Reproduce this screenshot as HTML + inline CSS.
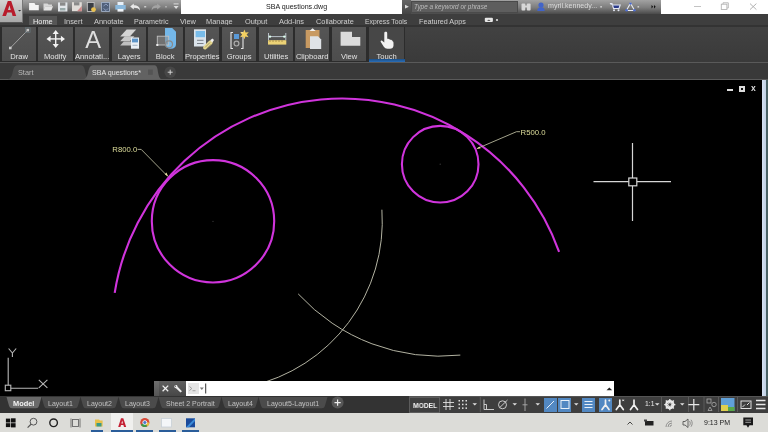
<!DOCTYPE html>
<html><head><meta charset="utf-8">
<style>
*{margin:0;padding:0;box-sizing:border-box}
html,body{width:768px;height:432px;overflow:hidden;background:#000;font-family:"Liberation Sans",sans-serif}
.a{position:absolute}
svg{will-change:transform}
.t{position:absolute;white-space:nowrap;line-height:1;will-change:transform}
#qat{left:0;top:0;width:768px;height:14.3px;background:linear-gradient(#a2a2a2,#7c7c7c 55%,#4a4a4a)}
#tabs{left:0;top:14.3px;width:768px;height:11px;background:#3e3e3e}
#rib{left:0;top:25px;width:768px;height:37px;background:linear-gradient(#424242,#3a3a3a)}
#ribd{left:0;top:25px;width:405px;height:37px;background:#2c2c2c}
.btn{position:absolute;top:27px;width:34.3px;height:34.4px;background:linear-gradient(#555,#4d4d4d)}
.bl{position:absolute;left:0;width:100%;top:26px;text-align:center;font-size:7.6px;color:#e2e2e2;white-space:nowrap;line-height:1;will-change:transform}
.rt{font-size:7.4px;color:#cfcfcf;top:16.5px}
#ftabs{left:0;top:62px;width:768px;height:18px;background:#393939;border-top:1.5px solid #5a5a5a}
</style></head><body>

<!-- canvas drawing -->
<svg class="a" style="left:0;top:0" width="768" height="432" viewBox="0 0 768 432">
  <g fill="none" stroke="#d034dc" stroke-width="2.1">
    <path d="M114.7 292.9 A230.2 230.2 0 0 1 559.1 251.9"/>
    <circle cx="213" cy="221.3" r="61.2"/>
    <circle cx="440.2" cy="164.2" r="38.3"/>
  </g>
  <g fill="none" stroke="#bcbcaa" stroke-width="0.95">
    <path d="M381.9 209.7 A169 169 0 0 1 250 386.2"/>
    <path d="M298.2 293.9 A192.2 192.2 0 0 0 460.3 355.1"/>
  </g>
  <g fill="none" stroke="#c0c0a4" stroke-width="0.85">
    <path d="M137.6 149.4 L141.2 149.4 L167.7 176.3"/>
    <path d="M520 131.7 L516.5 131.7 L477 148.6"/>
  </g>
  <g fill="#e8e0a0">
    <path d="M168.2 176.6 L164.8 174.2 L166.4 172.6 Z"/>
    <path d="M476.6 148.8 L479.6 146.4 L480.5 148.4 Z"/>
  </g>
  <text x="112.3" y="152.3" font-family="Liberation Sans" font-size="7.75" fill="#dcdc9a">R800.0</text>
  <text x="520.6" y="135.2" font-family="Liberation Sans" font-size="7.75" fill="#dcdc9a">R500.0</text>
  <circle cx="213" cy="221.3" r="0.6" fill="#444"/>
  <circle cx="440.2" cy="164.2" r="0.6" fill="#444"/>
  <!-- crosshair -->
  <g stroke="#d6d6d6" stroke-width="1.2" fill="none">
    <path d="M632.5 143 V178 M632.5 186 V221 M593.5 181.7 H628.8 M636.8 181.7 H671"/>
    <rect x="628.8" y="178" width="8" height="7.8"/>
  </g>
  <!-- UCS -->
  <g stroke="#b8b8b8" stroke-width="1.1" fill="none">
    <path d="M8.2 357.8 V385.2 M10.8 388.2 H38.2"/>
    <rect x="5.3" y="385.2" width="5.5" height="5.5"/>
    <path d="M38.8 379.8 L47.4 387.8 M47.4 379.8 L38.8 387.8"/>
    <path d="M8.6 348.5 L12.4 353 L16.2 348.5 M12.4 353 V357"/>
  </g>
</svg>

<!-- right blue strip -->
<div class="a" style="left:762px;top:80px;width:4.4px;height:316px;background:linear-gradient(90deg,#d6e2f4,#c0d0e4)"></div>
<div class="a" style="left:766.4px;top:80px;width:1.6px;height:316px;background:#4a6266"></div>

<!-- viewport controls -->
<div class="a" style="left:726.6px;top:88.8px;width:6.4px;height:1.8px;background:#ddd"></div>
<div class="a" style="left:739px;top:85.5px;width:6px;height:6px;background:#ddd"></div>
<div class="a" style="left:741px;top:88px;width:2px;height:2px;background:#111"></div>
<div class="t" style="left:750.5px;top:83.5px;font-size:8.5px;color:#ddd;font-weight:bold">x</div>

<!-- QAT -->
<div id="qat" class="a"></div>
<div class="a" style="left:180.6px;top:0;width:221.7px;height:13.6px;background:#fff"></div>
<div class="t" style="left:265.6px;top:3.6px;font-size:7.1px;color:#1a1a1a">SBA questions.dwg</div>
<div class="a" style="left:402.3px;top:0;width:8.7px;height:13.5px;background:linear-gradient(#666,#444)"></div>
<div class="t" style="left:404.8px;top:4px;font-size:5px;color:#ddd">&#9654;</div>
<div class="a" style="left:411px;top:0.8px;width:107.2px;height:12px;background:#5e5e5e;border:1px solid #4a4a4a"></div>
<div class="t" style="left:414px;top:3.6px;font-size:6.4px;color:#bdbdbd;font-style:italic">Type a keyword or phrase</div>
<div class="t" style="left:548px;top:3.2px;font-size:7.1px;color:#dcdcdc">myril.kennedy...</div>
<div class="a" style="left:660.6px;top:0;width:108px;height:13.6px;background:#fff"></div>
<svg class="a" style="left:0;top:0" width="768" height="14" viewBox="0 0 768 14">
  <!-- new -->
  <path d="M29.1 3.1 H34.5 L35.5 5 H38.8 V10.2 H29.1 Z" fill="#f4f4f4"/>
  <!-- open -->
  <path d="M43.5 3.4 H47.5 L48.5 4.5 H52 V6 H45.5 L43.5 10.3 Z" fill="#d8d8d8"/>
  <path d="M45 6.3 H53 L51.3 10.5 H43.5 Z" fill="#e4e4e4"/>
  <!-- save -->
  <rect x="58" y="2.4" width="9.4" height="9.1" fill="#e2e6ea"/>
  <rect x="60" y="2.4" width="5.4" height="3.3" fill="#8a8a8a"/>
  <rect x="60" y="8" width="5.4" height="2.5" fill="#9aa"/>
  <!-- save as -->
  <rect x="72" y="2.2" width="9.8" height="9" fill="#e0dcd8"/>
  <rect x="74" y="2.2" width="5.4" height="3.2" fill="#8a8a8a"/>
  <path d="M77 11.2 L81.8 6 V11.2 Z" fill="#c88"/>
  <!-- web -->
  <rect x="87.3" y="2.4" width="6.8" height="9" fill="#3a3e44" stroke="#cfcfcf" stroke-width="0.8"/>
  <circle cx="93.5" cy="9.6" r="2.4" fill="#e8c050"/>
  <!-- web2 -->
  <rect x="101.6" y="2.4" width="7.8" height="9" fill="#50607a" stroke="#a8b8d0" stroke-width="0.8"/>
  <path d="M103.5 6 L106 4 L108 6 M103.5 8.5 L106 10.5 L108 8.5" stroke="#9ac" stroke-width="0.8" fill="none"/>
  <!-- print -->
  <rect x="117.5" y="2" width="6" height="3" fill="#e8f0f8"/>
  <rect x="115.3" y="5" width="10.4" height="4.6" fill="#8ab8dc"/>
  <rect x="117.5" y="9" width="6" height="2.6" fill="#f0f4f8"/>
  <!-- undo -->
  <path d="M130.2 6.5 L133.8 3.4 V5.3 C137.5 5.3 140 6.8 140 10.5 C138.8 8.5 137 7.8 133.8 7.8 V9.6 Z" fill="#e8e8e8"/>
  <rect x="144.2" y="6" width="2" height="1.5" fill="#ccc"/>
  <!-- redo -->
  <path d="M160.8 6.5 L157.2 3.4 V5.3 C153.5 5.3 151.7 6.8 151.7 10.5 C152.6 8.5 154 7.8 157.2 7.8 V9.6 Z" fill="#a4a4a4"/>
  <rect x="165" y="6" width="2" height="1.5" fill="#aaa"/>
  <!-- customize -->
  <rect x="173.6" y="3.4" width="5" height="1" fill="#ddd"/>
  <path d="M173.6 6 H178.6 L176.1 9 Z" fill="#ddd"/>
  <!-- right icons -->
  <g fill="#d8d8d8">
    <rect x="521.5" y="3.5" width="3.8" height="7" rx="1"/>
    <rect x="526.8" y="3.5" width="3.8" height="7" rx="1"/>
    <rect x="524" y="5.5" width="4" height="2"/>
  </g>
  <circle cx="541" cy="5" r="2.6" fill="#4264c8"/>
  <path d="M537.3 11 C537.3 8.2 538.8 7.3 541 7.3 C543.2 7.3 544.7 8.2 544.7 11 Z" fill="#4264c8"/>
  <rect x="600.3" y="6" width="1.6" height="1.6" fill="#ccc"/>
  <path d="M610 3.5 H612 L613.5 8.5 H619 L620.2 5 H613 Z" fill="#2a3a8a" stroke="#e4e8f4" stroke-width="1.1"/>
  <circle cx="614" cy="10.3" r="1" fill="#e4e8f4"/>
  <circle cx="618.5" cy="10.3" r="1" fill="#e4e8f4"/>
  <path d="M630.5 3.3 L626.4 10.5 H634.6 Z" fill="none" stroke="#e8ecf4" stroke-width="1.1"/><circle cx="630.5" cy="3.6" r="1.2" fill="#4a6ad0"/><circle cx="626.6" cy="10.3" r="1.2" fill="#4a6ad0"/><circle cx="634.4" cy="10.3" r="1.2" fill="#4a6ad0"/>
  <rect x="637.5" y="6" width="1.6" height="1.6" fill="#ccc"/>
  <path d="M651.5 5 L653.2 6.8 L651.5 8.6 Z M654 5 L655.7 6.8 L654 8.6 Z" fill="#111"/>
  <!-- window controls -->
  <rect x="694" y="6.2" width="7" height="0.8" fill="#b4b4b4"/>
  <rect x="721.3" y="4.2" width="5.6" height="5.3" fill="none" stroke="#b4b4b4" stroke-width="0.9"/>
  <path d="M723 4.2 V2.8 H728.3 V8 H726.9" fill="none" stroke="#b4b4b4" stroke-width="0.9"/>
  <path d="M750 3.6 L756.4 9.6 M756.4 3.6 L750 9.6" stroke="#aaa" stroke-width="0.9"/>
</svg>

<!-- tabs row -->
<div id="tabs" class="a"></div>
<div class="a" style="left:28.5px;top:15.9px;width:28.6px;height:10.5px;background:#565656"></div>
<div class="t rt" style="left:32.7px;top:17.6px;color:#f0f0f0;">Home</div>
<div class="t rt" style="left:64.0px;top:17.6px;">Insert</div>
<div class="t rt" style="left:93.9px;top:17.6px;">Annotate</div>
<div class="t rt" style="left:134.3px;top:18.6px;font-size:7.15px;">Parametric</div>
<div class="t rt" style="left:179.7px;top:17.6px;">View</div>
<div class="t rt" style="left:206.4px;top:17.6px;">Manage</div>
<div class="t rt" style="left:244.7px;top:17.6px;">Output</div>
<div class="t rt" style="left:279.0px;top:17.6px;">Add-ins</div>
<div class="t rt" style="left:315.7px;top:17.6px;">Collaborate</div>
<div class="t rt" style="left:365.0px;top:18.9px;font-size:6.8px;">Express Tools</div>
<div class="t rt" style="left:419.0px;top:17.75px;font-size:7.2px;">Featured Apps</div>

<!-- ribbon -->
<div id="rib" class="a"></div>
<div id="ribd" class="a"></div>
<div class="a" style="left:0;top:25px;width:768px;height:1.5px;background:#333"></div>
<div class="btn" style="left:1.7px"><div class="bl">Draw</div></div>
<div class="btn" style="left:38.4px"><div class="bl">Modify</div></div>
<div class="btn" style="left:75.1px"><div class="bl">Annotati...</div></div>
<div class="btn" style="left:111.7px"><div class="bl">Layers</div></div>
<div class="btn" style="left:148.4px"><div class="bl">Block</div></div>
<div class="btn" style="left:185.1px"><div class="bl">Properties</div></div>
<div class="btn" style="left:221.8px"><div class="bl">Groups</div></div>
<div class="btn" style="left:258.5px"><div class="bl">Utilities</div></div>
<div class="btn" style="left:295.1px"><div class="bl">Clipboard</div></div>
<div class="btn" style="left:331.8px"><div class="bl">View</div></div>
<div class="btn" style="left:368.9px;width:35.3px;background:#474747"><div class="bl">Touch</div></div>
<div class="a" style="left:368.5px;top:58.5px;width:36px;height:3.2px;background:linear-gradient(#1a4f88,#2a6eb8);filter:blur(0.5px)"></div>
<svg class="a" style="left:0;top:0" width="420" height="62" viewBox="0 0 420 62">
  <!-- draw -->
  <path d="M10.3 48 L27.8 30.1" stroke="#a8a8a8" stroke-width="0.9" fill="none"/>
  <rect x="9" y="46.7" width="2.6" height="2.6" fill="#c8c8c8"/>
  <rect x="26.5" y="28.8" width="2.6" height="2.6" fill="#c8c8c8"/>
  <rect x="25.5" y="27.8" width="4.6" height="4.6" fill="none" stroke="#6a7a80" stroke-width="0.6"/>
  <!-- modify -->
  <g fill="#f2f2f2">
    <rect x="49" y="38.2" width="13.4" height="1.4"/>
    <rect x="55" y="32" width="1.4" height="13.8"/>
    <path d="M46.5 38.9 L50.6 35.8 V42 Z M65 38.9 L60.9 35.8 V42 Z M55.7 30 L52.6 34 H58.8 Z M55.7 48 L52.6 44 H58.8 Z"/>
  </g>
  <!-- annotate -->
  <text x="85.2" y="47.7" font-family="Liberation Sans" font-size="23.7" fill="#dedede">A</text>
  <!-- layers -->
  <path d="M120.2 36.6 L126.6 29.6 H136.2 L129.8 36.6 Z" fill="#d4d4d4"/>
  <path d="M120.2 41.2 L124.8 36.2 H134.4 L129.8 41.2 Z" fill="#c8c8c8"/>
  <path d="M120.2 45.6 L123.8 41.6 H131 V45.6 Z" fill="#c0c0c0"/>
  <rect x="131" y="37.5" width="8" height="11.2" fill="#e8eef4"/>
  <rect x="132" y="38.6" width="6" height="3.8" fill="#5c94c8"/>
  <rect x="132.5" y="44.8" width="5" height="0.9" fill="#9ab"/>
  <!-- block -->
  <path d="M165 28 H172.2 L176 31.8 V44.2 C176 47 174 48.8 171 48.8 C167.8 48.8 165 46.8 165 44 Z" fill="#74b8ea"/>
  <rect x="157.3" y="36.2" width="11.4" height="8.8" fill="rgba(140,140,140,0.55)" stroke="#c0c0c0" stroke-width="0.9"/>
  <circle cx="169" cy="44.3" r="3.5" fill="none" stroke="#8a8a8a" stroke-width="1.2"/>
  <rect x="156.3" y="44" width="2" height="2" fill="#eee"/>
  <!-- properties -->
  <rect x="194" y="29.3" width="12" height="17.2" fill="#dbe3ea"/>
  <rect x="195.6" y="31" width="9.4" height="6.2" fill="#78bcea"/>
  <rect x="197" y="39.8" width="6.5" height="1" fill="#7a8088"/>
  <rect x="197" y="43" width="6.5" height="1" fill="#7a8088"/>
  <path d="M203.2 46.8 L209.2 40.8 C210.5 40 212 40.6 212.4 41.6 C213 42.8 212.4 43.8 211.6 44.6 L206 49.2 C205 49.8 203.8 49.4 203.2 48.4 Z" fill="#e6d890"/>
  <path d="M205 47.5 L210 42.5 M206.8 48.6 L211.2 44.2" stroke="#8a8050" stroke-width="0.7"/>
  <path d="M210.2 40.2 L212.4 38.4 L214 40 L212.4 42.4 Z" fill="#eeeeee"/>
  <!-- groups -->
  <path d="M233 32.5 H231 V48.5 H233 M241 32.5 H243 V48.5 H241" fill="none" stroke="#e6e6e6" stroke-width="1.1"/>
  <rect x="234" y="34" width="5" height="5" fill="#5a9ad8"/>
  <circle cx="236.5" cy="43.6" r="2.4" fill="none" stroke="#aaa" stroke-width="1.2"/>
  <path d="M244.4 29.5 L245.6 32.5 L248.8 32.2 L246.6 34.5 L248.6 37.2 L245.4 36.5 L244.4 39.3 L243.2 36.5 L240 37.2 L242.2 34.5 L240 32.2 L243.2 32.5 Z" fill="#f4d060"/>
  <!-- utilities -->
  <path d="M268.5 33 V40 M285.8 33 V40 M268.5 36.6 H285.8" stroke="#b8c0c8" stroke-width="1" fill="none"/>
  <circle cx="270" cy="36.6" r="1.2" fill="#dfe"/>
  <circle cx="284.3" cy="36.6" r="1.2" fill="#dfe"/>
  <rect x="268" y="40.2" width="18.3" height="4.4" fill="#ecd276"/>
  <path d="M270 40.2 V42 M273 40.2 V42 M276 40.2 V42 M279 40.2 V42 M282 40.2 V42" stroke="#a08040" stroke-width="0.8"/>
  <!-- clipboard -->
  <rect x="305.7" y="30" width="13.8" height="18" fill="#c89a62"/>
  <path d="M309.5 31 L312.6 28.3 L315.7 31 Z" fill="#f0f0f0"/>
  <path d="M310 36.2 H318 L321.2 39.4 V49 H310 Z" fill="#dfe3e7"/>
  <!-- view -->
  <path d="M340.6 31.8 H352 V37 H360.3 V45.7 H340.6 Z" fill="#dcdcdc"/>
  <!-- touch -->
  <path d="M384.3 33.2 C384.3 32.3 384.9 31.8 385.75 31.8 C386.6 31.8 387.2 32.3 387.2 33.2 V38.8 C388.5 38.6 389.5 39 390 39.8 C391.2 39.6 392.3 40.2 392.6 41.2 C393.2 41.4 393.5 42 393.5 42.8 V45.5 C393.5 47.5 392 48.8 390 48.8 H387.5 C385.8 48.8 384.8 48 383.8 46.8 L380.8 42 C380.3 41.2 380.9 40.3 381.8 40.6 L384.3 42.5 Z" fill="#f2f2f2"/>
</svg>
<svg class="a" style="left:480px;top:14px" width="24" height="12" viewBox="480 14 24 12">
  <rect x="484.8" y="17.8" width="8.1" height="4.3" rx="1" fill="#e6e6e6"/>
  <path d="M487.2 20.8 Q488.85 18.6 490.5 20.8 Z" fill="#333"/>
  <circle cx="497" cy="20" r="1.1" fill="#ddd"/>
</svg>

<!-- file tabs -->
<div id="ftabs" class="a"></div>
<div class="a" style="left:0;top:78.6px;width:768px;height:1.4px;background:#5a5a5a"></div>
<svg class="a" style="left:0;top:62px" width="200" height="18" viewBox="0 62 200 18">
  <path d="M6.5 79.5 C10 79.5 11.5 77 12.5 73 C13.5 68 14.5 65.2 17.5 65.2 H81 C83 65.2 84 66.5 84.6 69 L87 79.5 Z" fill="#4c4c4c"/>
  <path d="M82 79.5 C85.5 79.5 87 77 88 73 C89 68 90 65.2 93 65.2 H154.5 C156.2 65.2 157 66.5 157.5 69 C158.3 74 159 79.5 162.5 79.5 Z" fill="#626262"/>
  <rect x="148" y="69.6" width="4.8" height="5.2" fill="#545454"/>
  <circle cx="170.2" cy="72.2" r="5.8" fill="#474747"/>
  <path d="M167.7 72.2 H172.7 M170.2 69.7 V74.7" stroke="#e0e0e0" stroke-width="0.9"/>
</svg>
<div class="t" style="left:18px;top:68.5px;font-size:7.3px;color:#b8b8b8">Start</div>
<div class="t" style="left:92.3px;top:69.9px;font-size:7.1px;color:#e4e4e4">SBA questions*</div>

<!-- logo -->
<div class="a" style="left:0;top:0;width:23px;height:23px;background:linear-gradient(#d4d4d4,#a8a8a8);border-right:1px solid #777;border-bottom:1px solid #555"></div>
<svg class="a" style="left:0;top:0" width="24" height="24" viewBox="0 0 24 24">
  <path d="M2.3 16 L7.8 1 H11.2 L16.2 16 H12.6 L11.6 12.6 H7.2 L6 16 Z M8 10 H10.8 L9.4 5.2 Z" fill="#b81c2c"/>
  <path d="M18 10 H21.2 L19.6 11.5 Z" fill="#333"/>
</svg>

<!-- command line -->
<div class="a" style="left:153.7px;top:381px;width:460.3px;height:15px;background:#fff"></div>
<div class="a" style="left:153.7px;top:381px;width:32px;height:15px;background:linear-gradient(#606060,#474747)"></div>
<div class="a" style="left:153.7px;top:381px;width:5px;height:15px;background:linear-gradient(#6e6e6e,#555)"></div>
<div class="a" style="left:187.5px;top:383px;width:11px;height:11px;background:#e4e4e4"></div>
<svg class="a" style="left:150px;top:378px" width="470" height="20" viewBox="150 378 470 20">
  <path d="M162.6 385.6 L168.2 391.2 M168.2 385.6 L162.6 391.2" stroke="#f0f0f0" stroke-width="1.3"/>
  <path d="M174.5 385.2 C173.8 386.5 174.5 388 176 388.2 L180.5 392.6 L182 391.2 L177.6 386.8 C177.6 385.3 176.3 384.6 175.2 385.2 L176 386.6 L175.3 387.2 Z" fill="#eee"/>
  <path d="M189.5 386.5 L191.8 388.5 L189.5 390.5" stroke="#9a9a9a" stroke-width="1" fill="none"/>
  <rect x="192.5" y="390.3" width="3" height="0.9" fill="#9a9a9a"/>
  <path d="M199.8 387.6 H203.8 L201.8 390 Z" fill="#777"/>
  <rect x="205.2" y="383.5" width="1" height="10" fill="#333"/>
  <path d="M606.5 390.3 H612.2 L609.35 387.6 Z" fill="#222"/>
</svg>

<!-- layout tabs / status -->
<div class="a" style="left:0;top:396px;width:768px;height:17px;background:#333"></div>
<svg class="a" style="left:0;top:396px" width="410" height="17" viewBox="0 396 410 17">
  <path d="M6.5 397 H41.5 L38.9 406 Q38.3 408.2 36.0 408.2 H12.0 Q9.7 408.2 9.1 406 Z" fill="#6a6a6a"/>
  <path d="M41.5 397 H80.5 L77.9 406 Q77.3 408.2 75.0 408.2 H47.0 Q44.7 408.2 44.1 406 Z" fill="#4b4b4b"/>
  <path d="M80.5 397 H118.5 L115.9 406 Q115.3 408.2 113.0 408.2 H86.0 Q83.7 408.2 83.1 406 Z" fill="#4b4b4b"/>
  <path d="M118.5 397 H158.5 L155.9 406 Q155.3 408.2 153.0 408.2 H124.0 Q121.7 408.2 121.1 406 Z" fill="#4b4b4b"/>
  <path d="M158.5 397 H221.5 L218.9 406 Q218.3 408.2 216.0 408.2 H164.0 Q161.7 408.2 161.1 406 Z" fill="#4b4b4b"/>
  <path d="M221.5 397 H258.5 L255.9 406 Q255.3 408.2 253.0 408.2 H227.0 Q224.7 408.2 224.1 406 Z" fill="#4b4b4b"/>
  <path d="M258.5 397 H327.5 L324.9 406 Q324.3 408.2 322.0 408.2 H264.0 Q261.7 408.2 261.1 406 Z" fill="#4b4b4b"/>
  <circle cx="337.6" cy="402.6" r="6" fill="#575757"/>
  <path d="M334.5 402.6 H340.7 M337.6 399.5 V405.7" stroke="#eee" stroke-width="1.2"/>
</svg>
<div class="t" style="left:12.8px;top:399.6px;font-size:7.4px;color:#f4f4f4;font-weight:bold">Model</div>
<div class="t" style="left:48px;top:399.9px;font-size:7px;color:#c0c0c0">Layout1</div>
<div class="t" style="left:86.5px;top:399.9px;font-size:7px;color:#c0c0c0">Layout2</div>
<div class="t" style="left:125px;top:399.9px;font-size:7px;color:#c0c0c0">Layout3</div>
<div class="t" style="left:166px;top:399.9px;font-size:7px;color:#c0c0c0">Sheet 2 Portrait</div>
<div class="t" style="left:228px;top:399.9px;font-size:7px;color:#c0c0c0">Layout4</div>
<div class="t" style="left:267px;top:399.9px;font-size:7px;color:#c0c0c0">Layout5-Layout1</div>

<!-- status bar -->
<div class="a" style="left:408.5px;top:396px;width:359.5px;height:17px;background:#3e3e3e;border-top:1px solid #555"></div>
<div class="a" style="left:408.8px;top:396.5px;width:31px;height:16px;border:1px solid #5c5c5c;background:#3f3f3f"></div>
<div class="t" style="left:412.6px;top:403.1px;font-size:7.1px;color:#f2f2f2;font-weight:bold;transform:scaleX(0.94);transform-origin:0 0">MODEL</div>
<div class="a" style="left:543.8px;top:398px;width:13px;height:13.5px;background:#5288c2"></div>
<div class="a" style="left:558px;top:398px;width:13px;height:13.5px;background:#5288c2"></div>
<div class="a" style="left:582.4px;top:398px;width:12.3px;height:13.5px;background:#5288c2"></div>
<div class="a" style="left:599.3px;top:398px;width:12.4px;height:13.5px;background:#5288c2"></div>
<div class="t" style="left:644.5px;top:401px;font-size:6.8px;color:#e8e8e8">1:1</div>
<svg class="a" style="left:400px;top:396px" width="368" height="17" viewBox="400 396 368 17">
  <g stroke="#e0e0e0" stroke-width="0.9" fill="none">
    <path d="M446 399 V410 M450 399 V410 M443 402.5 H454 M443 406.5 H454"/>
  </g>
  <g fill="#e0e0e0">
    <rect x="458.5" y="400" width="1.5" height="1.5"/><rect x="462" y="400" width="1.5" height="1.5"/><rect x="465.5" y="400" width="1.5" height="1.5"/>
    <rect x="458.5" y="403.7" width="1.5" height="1.5"/><rect x="462" y="403.7" width="1.5" height="1.5"/><rect x="465.5" y="403.7" width="1.5" height="1.5"/>
    <rect x="458.5" y="407.4" width="1.5" height="1.5"/><rect x="462" y="407.4" width="1.5" height="1.5"/><rect x="465.5" y="407.4" width="1.5" height="1.5"/>
    <path d="M472.5 403.3 H477 L474.75 405.6 Z"/>
    <path d="M512.5 403.3 H517 L514.75 405.6 Z"/>
    <path d="M535.5 403.3 H540 L537.75 405.6 Z"/>
    <path d="M574 403.3 H578.5 L576.25 405.6 Z"/>
    <path d="M655 403.3 H659.5 L657.25 405.6 Z"/>
    <path d="M680 403.3 H684.5 L682.25 405.6 Z"/>
  </g>
  <rect x="479.8" y="397" width="1" height="15" fill="#5a5a5a"/>
  <rect x="661" y="397" width="1" height="15" fill="#5a5a5a"/>
  <rect x="688" y="397" width="1" height="15" fill="#5a5a5a"/>
  <rect x="703.5" y="397" width="1" height="15" fill="#5a5a5a"/>
  <rect x="718" y="397" width="1" height="15" fill="#5a5a5a"/>
  <rect x="737" y="397" width="1" height="15" fill="#5a5a5a"/>
  <g stroke="#d8d8d8" stroke-width="0.9" fill="none">
    <path d="M484 399.5 V409.5 H494 M484 404.5 H486.5 V409.5"/>
    <circle cx="502.5" cy="404.8" r="4"/>
    <path d="M500 407.3 L507.5 400"/>
    <path d="M525 398.5 V411 M522.5 404.8 H527.5" stroke="#aaa"/>
  </g>
  <g stroke="#e8f0f8" stroke-width="1" fill="none">
    <path d="M546.5 408.5 L554 401"/>
    <rect x="561" y="400.5" width="8" height="8"/>
    <path d="M584.5 401.5 H592.5 M584.5 404.5 H592.5 M584.5 407.5 H592.5" stroke-width="1.2"/>
  </g>
  <g stroke="#f0f0f0" stroke-width="1.7" fill="none" stroke-linecap="round">
    <path d="M605.5 400.2 V404.8 L602 409.6 M605.5 404.8 L609 409.6"/>
    <path d="M619.8 400.2 V404.8 L616.3 409.6 M619.8 404.8 L623.3 409.6"/>
    <path d="M634 400.2 V404.8 L630.5 409.6 M634 404.8 L637.5 409.6"/>
  </g>
  <circle cx="609.3" cy="400.6" r="1" fill="#f0f0f0"/>
  <path d="M622.2 400.8 L624.2 399.8 M622.2 399.8 L624.2 400.8" stroke="#f0f0f0" stroke-width="0.7"/>
  <circle cx="669.8" cy="404.6" r="3.6" fill="none" stroke="#e8e8e8" stroke-width="2.2"/>
  <path d="M669.8 399 V410.2 M664.2 404.6 H675.4 M665.8 400.6 L673.8 408.6 M673.8 400.6 L665.8 408.6" stroke="#e8e8e8" stroke-width="1.4"/>
  <circle cx="669.8" cy="404.6" r="1.4" fill="#444"/>
  <path d="M693.8 399 V410.5 M688.3 404.7 H699.3" stroke="#e8e8e8" stroke-width="1.2"/>
  <rect x="707" y="399" width="4" height="4" fill="none" stroke="#aaa" stroke-width="0.8"/>
  <circle cx="714" cy="404.5" r="2.2" fill="none" stroke="#aaa" stroke-width="0.8"/>
  <path d="M708 410.5 L710 407 L712 410.5 Z" fill="none" stroke="#aaa" stroke-width="0.8"/>
  <rect x="721" y="398" width="13.5" height="13" fill="#60a0d8"/>
  <rect x="721" y="405" width="7" height="6" fill="#e0d050"/>
  <rect x="728" y="407" width="6.5" height="4" fill="#58a848"/>
  <rect x="741" y="401" width="10" height="7.5" fill="none" stroke="#e0e0e0" stroke-width="1"/>
  <path d="M742.5 407 L745 404.5 M749.5 402.5 L747 405" stroke="#e0e0e0" stroke-width="1"/>
  <path d="M756 400.5 H765.5 M756 404.5 H765.5 M756 408.5 H765.5" stroke="#e8e8e8" stroke-width="1.4"/>
</svg>

<!-- taskbar -->
<div class="a" style="left:0;top:413px;width:768px;height:19px;background:#dcdcd8"></div>
<div class="a" style="left:111px;top:413px;width:22.2px;height:19px;background:#f0f0ee"></div>
<div class="a" style="left:90.9px;top:430.3px;width:12.1px;height:1.7px;background:#2a5d9a"></div>
<div class="a" style="left:111px;top:430.3px;width:22.2px;height:1.7px;background:#2a5d9a"></div>
<div class="a" style="left:135.8px;top:430.3px;width:17.6px;height:1.7px;background:#2a5d9a"></div>
<div class="a" style="left:159.2px;top:430.3px;width:16.8px;height:1.7px;background:#2a5d9a"></div>
<div class="a" style="left:182px;top:430.3px;width:17px;height:1.7px;background:#2a5d9a"></div>
<svg class="a" style="left:0;top:413px" width="768" height="19" viewBox="0 413 768 19">
  <g fill="#111">
    <rect x="5.9" y="418.6" width="4.4" height="3.9"/><rect x="11" y="418.3" width="4.6" height="4.2"/>
    <rect x="5.9" y="423.2" width="4.4" height="3.9"/><rect x="11" y="423.2" width="4.6" height="4.2"/>
  </g>
  <circle cx="33.5" cy="421.7" r="3.4" fill="none" stroke="#555" stroke-width="1"/>
  <path d="M31 424.3 L27.6 427.6" stroke="#555" stroke-width="1.2"/>
  <circle cx="53.6" cy="422.8" r="3.8" fill="none" stroke="#222" stroke-width="1.4"/>
  <g stroke="#666" stroke-width="0.9" fill="none">
    <rect x="72.5" y="419.5" width="6" height="7"/>
    <path d="M71 418.5 V427.5 M80 418.5 V427.5"/>
  </g>
  <path d="M95 419.5 H99 L100 420.5 H102.6 V426.5 H95 Z" fill="#e8c048"/>
  <rect x="96.5" y="423" width="5" height="3.5" fill="#3a9a88"/>
  <path d="M118.2 427 L121 418.3 H123.3 L126.2 427 H124 L123.4 425 H121 L120.4 427 Z M121.4 423.5 H123 L122.2 420.6 Z" fill="#c42034"/>
  <circle cx="144.8" cy="422.5" r="4.6" fill="#d84a38"/>
  <path d="M144.8 422.5 L140.8 424.8 A4.6 4.6 0 0 0 147.4 426.3 Z" fill="#3a9a48"/>
  <path d="M144.8 422.5 L147.4 426.3 A4.6 4.6 0 0 0 149.4 422.5 Z" fill="#e8c040"/>
  <circle cx="144.8" cy="422.5" r="2" fill="#4a7ad0" stroke="#fff" stroke-width="0.8"/>
  <rect x="161.5" y="418.5" width="10" height="8.5" fill="#f4f6f8" stroke="#c8d0d8" stroke-width="0.8"/>
  <rect x="186" y="418.3" width="9" height="9" fill="#1a4a9a"/>
  <path d="M186 427.3 L195 418.3 V421 L189 427.3 Z" fill="#3a8ad8"/>
  <path d="M627.5 424.5 L630 422 L632.5 424.5" stroke="#333" stroke-width="0.9" fill="none"/>
  <rect x="645" y="421" width="8.5" height="4.5" fill="#222"/>
  <rect x="644" y="419.5" width="3" height="2" fill="#444"/>
  <g stroke="#888" stroke-width="0.9" fill="none">
    <path d="M666 427 A6 6 0 0 1 672 421 M668 427 A4 4 0 0 1 672 423 M670 427 A2 2 0 0 1 672 425"/>
  </g>
  <path d="M683 421.5 H685 L688 419 V427.5 L685 425 H683 Z" fill="none" stroke="#555" stroke-width="0.9"/>
  <path d="M689.5 421 C690.5 422.5 690.5 424 689.5 425.5 M691 419.8 C692.6 422 692.6 424.5 691 426.7" stroke="#777" stroke-width="0.8" fill="none"/>
  <path d="M743.3 417.5 H753 V425.3 H749.5 L748 427.8 L746.5 425.3 H743.3 Z" fill="#1a1a1a"/>
  <path d="M745.3 420 H751 M745.3 422.3 H751" stroke="#ddd" stroke-width="0.7"/>
</svg>
<div class="t" style="left:703.5px;top:418.5px;font-size:7px;color:#222">9:13 PM</div>

</body></html>
